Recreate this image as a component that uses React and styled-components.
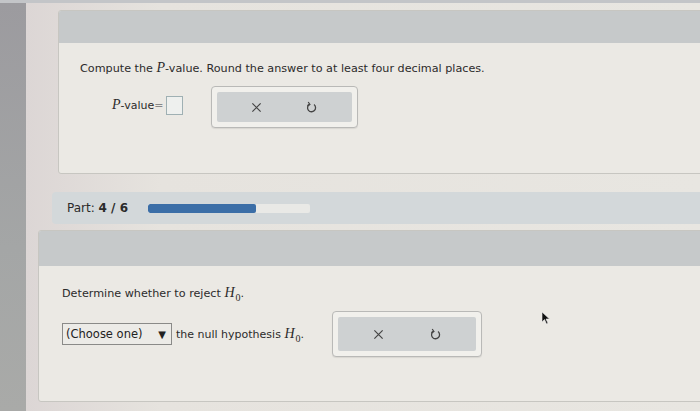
import React from 'react';
import styled, { createGlobalStyle } from 'styled-components';

const Global = createGlobalStyle`
  html, body { margin: 0; padding: 0; }
  body {
    width: 700px;
    height: 411px;
    overflow: hidden;
    background: #e4e1dc;
    font-family: "DejaVu Sans", Verdana, sans-serif;
    color: #2b2b2b;
  }
`;

const Screen = styled.div`
  display: flex;
  height: 411px;
  border-top: 3px solid #c3c5c8;
  box-sizing: border-box;
`;

const Bezel = styled.div`
  width: 26px;
  flex: none;
  background: linear-gradient(180deg, #9c9b9f 0%, #a4a6a6 60%, #a9aaa8 100%);
`;

const Main = styled.div`
  flex: 1;
  display: flex;
  flex-direction: column;
  padding-top: 7px;
  background: linear-gradient(90deg, #dcd6d5 0%, #e6e3de 20%, #e8e6e1 100%);
`;

const Card = styled.div`
  margin-left: ${p => p.left}px;
  margin-right: -10px;
  height: ${p => p.h}px;
  border: 1px solid #c7c6c1;
  border-radius: 3px;
  background: #ebe9e4;
  display: flex;
  flex-direction: column;
  overflow: hidden;
`;

const CardHead = styled.div`
  height: ${p => p.h}px;
  flex: none;
  background: #c6c9ca;
`;

const CardBody = styled.div`
  display: flex;
  flex-direction: column;
  padding-left: ${p => p.pl}px;
  padding-top: ${p => p.pt}px;
`;

const Prompt = styled.div`
  font-size: 11.2px;
  line-height: 14px;
`;

const Row = styled.div`
  display: flex;
  align-items: center;
  margin-top: ${p => p.mt}px;
  margin-left: ${p => p.ml || 0}px;
`;

const Label = styled.span`
  font-size: 11px;
  display: flex;
  align-items: center;
  margin-left: ${p => p.ml || 0}px;
`;

const Ital = styled.i`
  font-family: "Liberation Serif", "Times New Roman", serif;
  font-size: 14px;
`;

const Sub = styled.span`
  font-family: "Liberation Serif", serif;
  font-size: 10px;
  position: relative;
  top: 4px;
  margin-left: 1px;
`;

const Eq = styled.span`
  color: #888;
`;

const AnswerBox = styled.span`
  display: inline-block;
  width: 17px;
  height: 19px;
  margin-left: 2px;
  border: 1px solid #9fb0b3;
  background: #eef0ee;
  box-sizing: border-box;
`;

const ActionGroup = styled.div`
  width: ${p => p.w}px;
  height: ${p => p.h}px;
  margin-left: ${p => p.ml}px;
  margin-top: ${p => p.mt || 0}px;
  padding: 5px;
  box-sizing: border-box;
  border: 1px solid #b9b9b7;
  border-radius: 4px;
  background: #f1f0ec;
  box-shadow: 0 1px 1px rgba(0,0,0,0.08);
`;

const ActionInner = styled.div`
  height: 100%;
  border-radius: 2px;
  background: #ced1d2;
  display: flex;
  align-items: center;
  justify-content: space-around;
  padding: 0 12px;
  color: #444;
`;

const PartBar = styled.div`
  margin: 18px -10px 6px 26px;
  height: 32px;
  border-radius: 4px;
  background: #d3d8da;
  display: flex;
  align-items: center;
  padding-left: 15px;
  font-size: 12px;
`;

const PartText = styled.span`
  b { font-weight: bold; }
`;

const Track = styled.div`
  margin-left: 20px;
  width: 162px;
  height: 9px;
  border-radius: 2px;
  background: #e9e9e6;
  overflow: hidden;
`;

const Fill = styled.div`
  height: 100%;
  background: #3b6ea7;
  border-radius: 2px;
`;

const Select = styled.div`
  height: 22px;
  width: 110px;
  box-sizing: border-box;
  border: 1px solid #8a8a88;
  background: #ecebe7;
  display: flex;
  align-items: center;
  justify-content: space-between;
  padding: 0 5px 0 3px;
  font-size: 11.5px;
  color: #222;
`;

const Cursor = styled.svg`
  position: absolute;
  left: 541px;
  top: 311px;
`;

const XIcon = () => (
  <svg width="11" height="11" viewBox="0 0 12 12">
    <path d="M1.5 1.5 L10.5 10.5 M10.5 1.5 L1.5 10.5" stroke="#444" strokeWidth="1.3" fill="none" />
  </svg>
);

const UndoIcon = () => (
  <svg width="11" height="13" viewBox="0 0 11 13">
    <path d="M3.4 3.4 A4 4 0 1 0 8 3.6" stroke="#444" strokeWidth="1.3" fill="none" />
    <path d="M2.2 1 L3.9 3.4 L1.4 4.6" stroke="#444" strokeWidth="1.2" fill="none" />
  </svg>
);

const Actions = props => (
  <ActionGroup {...props}>
    <ActionInner>
      <XIcon />
      <UndoIcon />
    </ActionInner>
  </ActionGroup>
);

export default function App() {
  return (
    <>
      <Global />
      <Screen>
        <Bezel />
        <Main>
          <Card left={32} h={162}>
            <CardHead h={32} />
            <CardBody pl={21} pt={18}>
              <Prompt>
                Compute the <Ital>P</Ital>-value. Round the answer to at least four decimal places.
              </Prompt>
              <Row mt={6} ml={32}>
                <Label>
                  <Ital>P</Ital>-value<Eq>=</Eq>
                  <AnswerBox />
                </Label>
                <Actions w={147} h={42} ml={28} mt={4} />
              </Row>
            </CardBody>
          </Card>

          <PartBar>
            <PartText>Part: <b>4 / 6</b></PartText>
            <Track>
              <Fill style={{ width: `${(4 / 6) * 100}%` }} />
            </Track>
          </PartBar>

          <Card left={12} h={170}>
            <CardHead h={35} />
            <CardBody pl={23} pt={20}>
              <Prompt>
                Determine whether to reject <Ital>H</Ital><Sub>0</Sub>.
              </Prompt>
              <Row mt={10}>
                <Select>
                  <span>(Choose one)</span>
                  <span style={{ fontSize: 10 }}>▼</span>
                </Select>
                <Label ml={4}>
                  the null hypothesis&nbsp;<Ital>H</Ital><Sub>0</Sub>.
                </Label>
                <Actions w={150} h={46} ml={28} />
              </Row>
            </CardBody>
          </Card>
        </Main>
      </Screen>
      <Cursor width="10" height="14" viewBox="0 0 10 14">
        <path d="M1 1 L1 11 L3.5 8.5 L5.5 13 L7 12.3 L5 8 L8.5 8 Z" fill="#111" stroke="#eee" strokeWidth="0.6" />
      </Cursor>
    </>
  );
}
